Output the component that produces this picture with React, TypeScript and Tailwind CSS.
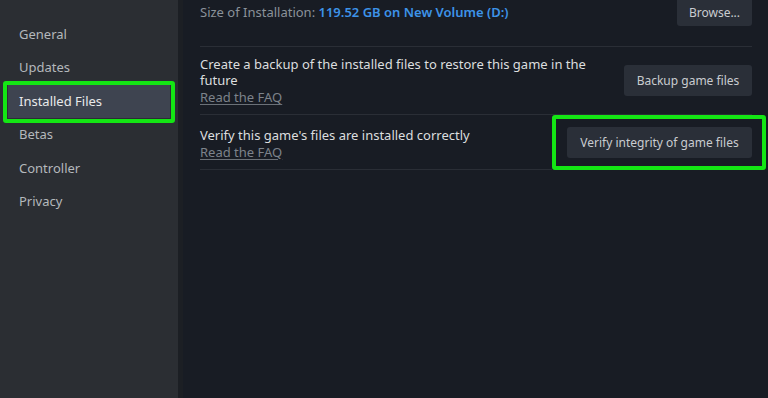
import React from 'react';

const navItems = ['General', 'Updates', 'Installed Files', 'Betas', 'Controller', 'Privacy'];
const active = 'Installed Files';

const SteamButton: React.FC<{ label: string; className?: string }> = ({ label, className = '' }) => (
  <button
    className={`rounded-[3px] bg-[#2a2f38] text-[12px] text-[#c9ccd0] whitespace-nowrap shrink-0 flex items-center justify-center ${className}`}
  >
    {label}
  </button>
);

const FaqLink: React.FC = () => (
  <a className="text-[#7d838b] underline decoration-[#6b7178] underline-offset-2 cursor-pointer">
    Read the FAQ
  </a>
);

export default function App() {
  return (
    <div
      className="w-[768px] h-[398px] flex overflow-hidden bg-[#181c24]"
      style={{ fontFamily: '"Noto Sans", "Open Sans", Arial, sans-serif' }}
    >
      {/* Sidebar */}
      <aside className="w-[178px] shrink-0 bg-[#2b2e33] pt-[18px] flex flex-col gap-[1px]">
        {navItems.map((item) => (
          <div key={item} className="relative px-[8px]">
            <div
              className={`h-[32.5px] flex items-center pl-[11px] text-[13px] ${
                item === active ? 'bg-[#3e4450] text-[#e8e9ea]' : 'text-[#b4b8bc]'
              }`}
            >
              {item}
            </div>
            {item === active && (
              <div className="absolute left-[3px] right-[3px] -top-[4px] -bottom-[5px] border-[4px] border-[#14e614] rounded-[3px]" />
            )}
          </div>
        ))}
      </aside>
      <div className="w-[5px] shrink-0 bg-[#1c1f24]" />

      {/* Main */}
      <main className="flex-1 pl-[17px] pr-[16px] text-[13px] text-[#dcdedf]">
        <div className="h-[47px] flex justify-between border-b border-[#2a2e36]">
          <div className="h-[25px] flex items-center">
            <span className="text-[#8b929a]">Size of Installation:&nbsp;</span>
            <span className="text-[#3d93e8] font-semibold">119.52 GB on New Volume (D:)</span>
          </div>
          <SteamButton label="Browse..." className="h-[26px] w-[75px] rounded-t-none" />
        </div>

        <div className="h-[68px] flex items-center justify-between border-b border-[#2a2e36]">
          <div className="w-[400px] leading-[16.5px]">
            <p>Create a backup of the installed files to restore this game in the future</p>
            <FaqLink />
          </div>
          <SteamButton label="Backup game files" className="h-[31px] w-[128px]" />
        </div>

        <div className="relative h-[55px] flex items-center justify-between">
          <div className="leading-[17px] pt-[2px]">
            <p>Verify this game's files are installed correctly</p>
            <FaqLink />
          </div>
          <SteamButton label="Verify integrity of game files" className="h-[31px] w-[185px]" />
          <div className="absolute left-0 right-[200px] bottom-0 h-px bg-[#2a2e36]" />
          <div className="absolute left-[352px] -right-[14px] top-0 bottom-0 border-[4px] border-[#14e614] rounded-[3px]" />
        </div>
      </main>
    </div>
  );
}
